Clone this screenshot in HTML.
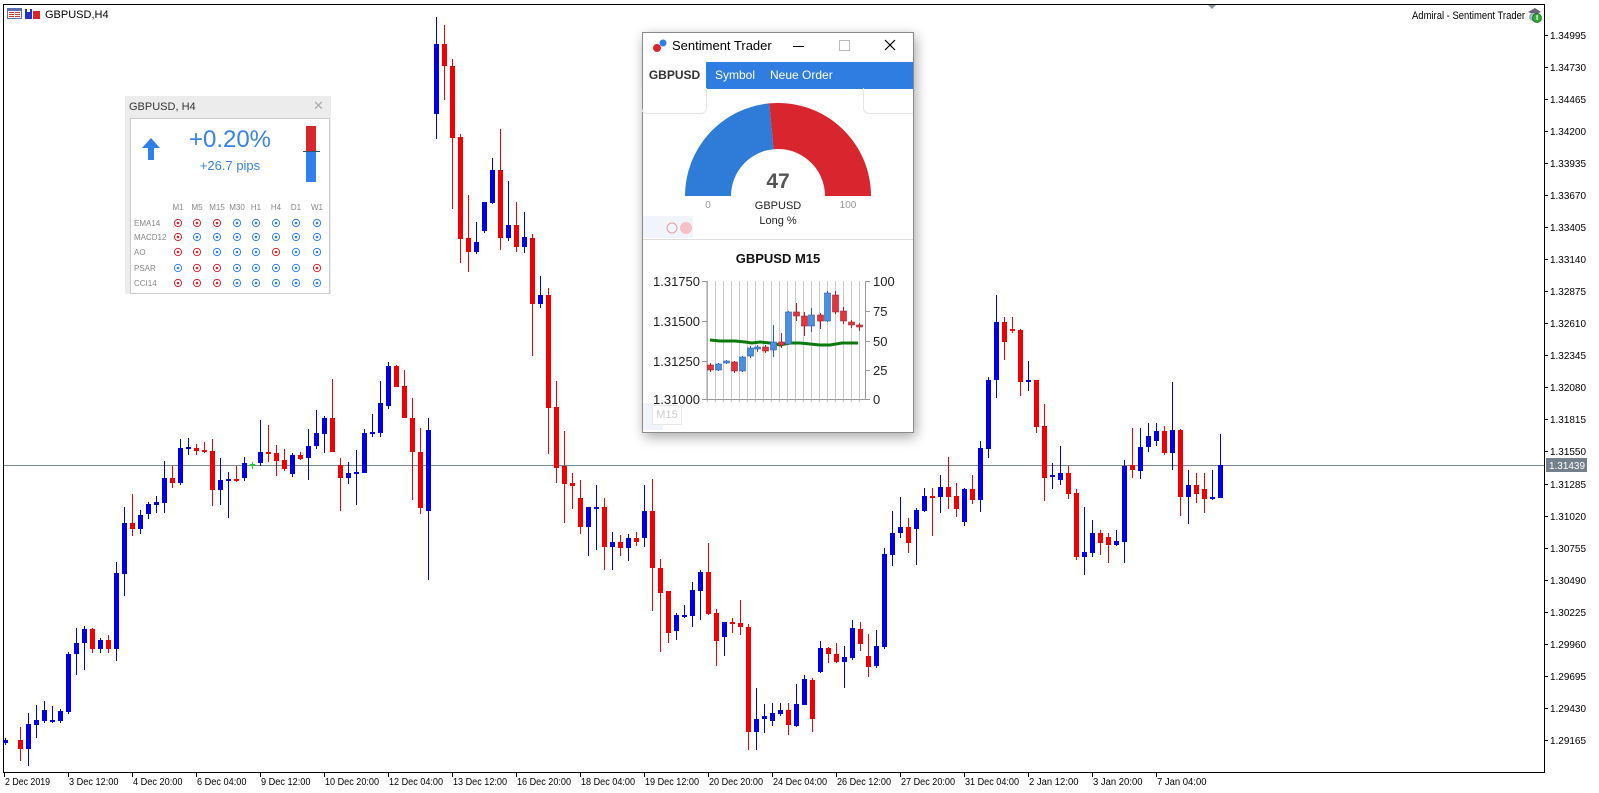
<!DOCTYPE html>
<html><head><meta charset="utf-8">
<style>
html,body{margin:0;padding:0;background:#fff;}
body{width:1599px;height:793px;position:relative;overflow:hidden;font-family:"Liberation Sans",Arial,sans-serif;}
.abs{position:absolute;}
.ax{position:absolute;font-size:11px;color:#000;white-space:nowrap;}
</style></head><body>
<svg id="main" class="abs" style="left:0;top:0" width="1599" height="793" xmlns="http://www.w3.org/2000/svg"></svg>

<!-- top-left header -->
<svg class="abs" style="left:7px;top:8px" width="34" height="11">
 <rect x="0.5" y="0.5" width="14" height="10" fill="#fff" stroke="#5a6fb0"/>
 <rect x="1" y="1" width="13" height="2" fill="#5a6fb0"/>
 <rect x="2" y="4" width="5" height="1" fill="#d33"/><rect x="8" y="4" width="5" height="1" fill="#d33"/>
 <rect x="2" y="6" width="5" height="1" fill="#d33"/><rect x="8" y="6" width="5" height="1" fill="#d33"/>
 <rect x="2" y="8" width="5" height="1" fill="#d33"/><rect x="8" y="8" width="5" height="1" fill="#d33"/>
 <rect x="18" y="1" width="7" height="10" fill="#2233cc"/><rect x="26" y="3" width="7" height="8" fill="#dd2222"/>
 <rect x="20" y="1" width="3" height="3" fill="#fff"/>
</svg>
<div class="ax" style="left:45px;top:9px;font-size:11px;">GBPUSD,H4</div>
<svg class="abs" style="left:1400px;top:6px" width="126" height="16"><text x="12" y="13" font-size="11" textLength="113" lengthAdjust="spacingAndGlyphs" font-family="Liberation Sans,Arial,sans-serif">Admiral - Sentiment Trader</text></svg>
<svg class="abs" style="left:1527px;top:7px" width="16" height="16">
 <path d="M1 5 L8 1 L14 5 L8 8 Z" fill="#667"/><circle cx="6" cy="10" r="4" fill="#9bc"/>
 <circle cx="10" cy="11" r="4.5" fill="#3a3" stroke="#262" stroke-width="0.8"/><rect x="9.5" y="8" width="1.2" height="5" fill="#fff"/>
</svg>

<!-- GBPUSD H4 widget -->
<div class="abs" style="left:125px;top:96px;width:206px;height:198px;background:#ececec;"></div>
<div class="abs" style="left:129px;top:101px;font-size:11px;color:#333;">GBPUSD, H4</div>
<div class="abs" style="left:313px;top:98px;font-size:13px;color:#aaa;">✕</div>
<div class="abs" style="left:130px;top:118px;width:198px;height:174px;background:#fff;border:1px solid #ccc;"></div>
<svg class="abs" style="left:140px;top:136px" width="22" height="26"><path d="M11 2 L20 12 L14 12 L14 24 L8 24 L8 12 L2 12 Z" fill="#2f80ed"/></svg>
<div class="abs" style="left:170px;top:126px;width:120px;text-align:center;font-size:24px;color:#3a82e8;">+0.20%</div>
<div class="abs" style="left:170px;top:158px;width:120px;text-align:center;font-size:13px;color:#3a82e8;">+26.7 pips</div>
<div class="abs" style="left:306px;top:126px;width:10px;height:26px;background:#d9262f;"></div>
<div class="abs" style="left:306px;top:152px;width:10px;height:30px;background:#2f80ed;"></div>
<div class="abs" style="left:303px;top:151px;width:17px;height:1px;background:#356;"></div>
<svg id="grid" class="abs" style="left:0;top:0" width="340" height="300"></svg>

<!-- Sentiment Trader window -->
<div class="abs" style="left:642px;top:32px;width:270px;height:399px;background:#fff;border:1px solid #8a8a8a;box-shadow:2px 4px 12px rgba(0,0,0,0.35);"></div>
<svg class="abs" style="left:652px;top:38px" width="16" height="16"><circle cx="5" cy="10" r="4" fill="#d9262f"/><circle cx="11" cy="5" r="3.5" fill="#2f80ed"/></svg>
<div class="abs" style="left:672px;top:38px;font-size:13px;color:#000;">Sentiment Trader</div>
<div class="abs" style="left:793px;top:46px;width:11px;height:1px;background:#000;"></div>
<div class="abs" style="left:839px;top:40px;width:9px;height:9px;border:1px solid #bbb;"></div>
<svg class="abs" style="left:884px;top:39px" width="12" height="12"><path d="M1 1 L11 11 M11 1 L1 11" stroke="#000" stroke-width="1.2"/></svg>
<div class="abs" style="left:643px;top:62px;width:270px;height:27px;background:#2f7de1;"></div>
<div class="abs" style="left:643px;top:62px;width:63px;height:27px;background:#fff;"></div>
<div class="abs" style="left:643px;top:68px;width:63px;text-align:center;font-size:12px;font-weight:bold;color:#333;">GBPUSD</div>
<div class="abs" style="left:715px;top:68px;font-size:12px;color:#fff;">Symbol</div>
<div class="abs" style="left:770px;top:68px;font-size:12px;color:#fff;">Neue Order</div>
<div class="abs" style="left:641px;top:88px;width:64px;height:25px;border:1px solid #e6e6e6;border-top:none;border-radius:0 0 6px 6px;"></div>
<div class="abs" style="left:863px;top:88px;width:49px;height:25px;border:1px solid #e6e6e6;border-top:none;border-right:none;border-radius:0 0 0 6px;"></div>
<div class="abs" style="left:643px;top:216px;width:50px;height:22px;background:#f1f4fa;"></div>
<div class="abs" style="left:643px;top:239px;width:270px;height:1px;background:#ddd;"></div>
<div class="abs" style="left:643px;top:403px;width:20px;height:27px;background:#f1f4fa;"></div>
<div class="abs" style="left:652px;top:405px;width:28px;height:18px;border:1px solid #e8e8e8;background:#fff;font-size:11px;color:#ccc;text-align:center;line-height:18px;">M15</div>
<svg id="win" class="abs" style="left:0;top:0" width="920" height="440"></svg>

<script>
function S(id,html){document.getElementById(id).innerHTML+=html;}
var F='font-family="Liberation Sans,Arial,sans-serif"';
var s='';
s+='<rect x="3.5" y="4.5" width="1541" height="768" fill="#fff" stroke="#000"/>';
s+='<line x1="4" y1="465.5" x2="1544" y2="465.5" stroke="#778899"/>';
s+='<path d="M1208 5 L1216 5 L1212 9 Z" fill="#8a96a3"/>';
var labs=['1.34995','1.34730','1.34465','1.34200','1.33935','1.33670','1.33405','1.33140','1.32875','1.32610','1.32345','1.32080','1.31815','1.31550','1.31285','1.31020','1.30755','1.30490','1.30225','1.29960','1.29695','1.29430','1.29165'];
for(var i=0;i<labs.length;i++){var y=35+32*i;var yy=(i>=14)?y+1:y;
 s+='<line x1="1544" y1="'+(yy+0.5)+'" x2="1548" y2="'+(yy+0.5)+'" stroke="#000"/>';
 s+='<text x="1550" y="'+(yy+4)+'" font-size="10.5" textLength="36" lengthAdjust="spacingAndGlyphs" '+F+'>'+labs[i]+'</text>';}
s+='<rect x="1546" y="458" width="41" height="14" fill="#73808c"/><text x="1549" y="469" font-size="10.5" textLength="36" lengthAdjust="spacingAndGlyphs" fill="#fff" '+F+'>1.31439</text>';
var dates=['2 Dec 2019','3 Dec 12:00','4 Dec 20:00','6 Dec 04:00','9 Dec 12:00','10 Dec 20:00','12 Dec 04:00','13 Dec 12:00','16 Dec 20:00','18 Dec 04:00','19 Dec 12:00','20 Dec 20:00','24 Dec 04:00','26 Dec 12:00','27 Dec 20:00','31 Dec 04:00','2 Jan 12:00','3 Jan 20:00','7 Jan 04:00'];
for(var i=0;i<dates.length;i++){var x=4+64*i;
 s+='<line x1="'+(x+0.5)+'" y1="772" x2="'+(x+0.5)+'" y2="777" stroke="#000"/>';
 s+='<text x="'+(x+1)+'" y="785" font-size="10.5" textLength="'+(dates[i].length*4.5)+'" lengthAdjust="spacingAndGlyphs" '+F+'>'+dates[i]+'</text>';}
var C="b 740 743 738 745|r 740 749 727 761|b 724 749 713 766|b 720 725 705 738|b 710 721 701 723|b 720 722 706 723|b 711 721 709 723|b 654 712 652 714|b 643 654 628 675|b 629 643 626 670|r 629 649 628 653|b 640 649 638 653|r 640 649 635 653|b 573 649 562 661|b 523 574 507 596|r 523 529 494 536|b 515 529 510 534|b 504 514 502 519|b 502 505 496 513|b 478 503 461 513|r 478 483 466 488|b 448 483 439 485|b 447 449 438 455|r 448 451 444 455|r 450 452 442 453|r 451 490 439 506|b 480 490 458 505|b 479 480 472 518|r 479 481 466 482|b 463 478 457 481|g 464 466 462 469|b 452 463 420 466|r 452 454 425 462|r 453 461 445 476|r 460 469 449 471|b 455 474 453 477|r 455 459 452 460|b 446 458 429 480|b 433 446 410 449|b 418 434 416 453|r 418 452 379 452|r 465 478 458 511|b 473 478 462 484|b 472 473 450 505|b 433 473 429 473|b 432 434 414 437|b 403 433 381 437|b 366 406 362 409|r 366 387 365 387|r 386 418 370 418|r 418 452 398 500|r 452 508 428 514|b 430 511 418 580|b 44 114 17 139|r 44 66 25 100|r 66 138 59 209|r 137 239 134 263|r 238 252 195 272|b 242 252 222 254|b 202 231 202 233|b 170 203 158 204|r 170 238 129 250|b 225 238 181 241|r 225 247 202 252|b 237 247 212 253|r 238 304 234 356|b 295 304 276 308|r 295 408 288 454|r 407 468 381 483|r 466 484 431 523|r 483 486 473 509|r 498 527 480 534|b 507 527 507 556|b 507 508 485 550|r 507 547 498 570|b 542 547 532 570|r 542 548 535 556|b 538 548 534 561|r 538 542 532 546|b 511 538 485 547|r 511 568 479 611|r 568 593 559 652|r 591 633 591 643|b 615 631 613 640|b 615 616 605 618|b 590 616 582 627|b 572 591 570 620|r 572 614 543 615|r 613 641 609 666|b 622 637 622 656|r 622 624 618 633|r 623 627 600 635|r 627 732 624 750|b 719 732 688 750|b 716 719 704 733|b 713 721 703 726|b 710 714 703 716|r 710 725 703 735|b 704 726 684 727|b 679 705 675 705|r 680 719 678 732|b 648 672 641 673|r 648 654 647 663|r 654 662 643 663|b 657 662 646 688|b 628 658 620 660|r 629 644 622 651|r 656 667 634 677|b 646 666 630 668|b 554 647 548 649|b 533 555 511 566|b 527 533 497 538|r 527 543 518 553|b 510 529 508 565|b 496 511 488 512|r 496 497 488 536|b 487 497 475 513|r 487 497 457 509|r 496 509 483 517|b 489 522 488 526|r 489 500 475 504|b 448 500 441 512|b 380 449 377 458|b 322 380 295 398|r 322 342 317 360|r 329 331 317 333|r 330 382 329 396|b 380 381 361 391|r 380 427 380 433|r 426 478 404 501|b 475 477 463 489|b 473 480 446 485|r 473 494 466 499|r 493 557 489 560|b 552 557 507 575|b 533 553 520 557|r 533 543 530 555|r 537 545 533 563|b 541 545 530 546|b 466 542 460 563|r 465 470 428 478|b 447 471 428 479|b 436 447 423 452|b 431 441 423 446|r 431 453 426 455|b 430 453 382 470|r 430 497 429 516|b 485 497 470 524|r 485 494 473 503|r 489 499 473 513|b 497 499 470 500|b 465 498 434 498".split('|');
var col={b:'#0000e6',r:'#f00000',g:'#22cc22'};
for(var k=0;k<C.length;k++){var p=C[k].split(' ');var t=+p[1],bt=+p[2],h=+p[3],l=+p[4];var cx=12+8*k;if(k==0)cx=5;
 var c=col[p[0]];var x0=(k==0)?4:cx-2;var w=(k==0)?4:5;
 s+='<rect x="'+cx+'" y="'+h+'" width="1" height="'+(l-h)+'" fill="'+c+'"/>';
 s+='<rect x="'+x0+'" y="'+t+'" width="'+w+'" height="'+Math.max(2,bt-t)+'" fill="'+c+'"/>';}
S('main',s);

var g='';var cols=['M1','M5','M15','M30','H1','H4','D1','W1'];var cx=[178,197,217,237,256,276,296,317];
for(var i=0;i<8;i++)g+='<text x="'+cx[i]+'" y="210" font-size="8" fill="#888" text-anchor="middle" '+F+'>'+cols[i]+'</text>';
var rows=['EMA14','MACD12','AO','PSAR','CCI14'];var ry=[223,237,252,268,283];
var pat=['RRRBBBBB','RBBBBBBB','RRBBBRBB','BRRBBBBR','RRRBBBBB'];
for(var r=0;r<5;r++){g+='<text x="134" y="'+(ry[r]+3)+'" font-size="8" fill="#888" '+F+'>'+rows[r]+'</text>';
 for(var i=0;i<8;i++){var c=pat[r][i]=='R'?'#d9262f':'#2f80ed';
  g+='<circle cx="'+cx[i]+'" cy="'+ry[r]+'" r="3.6" fill="none" stroke="'+c+'" stroke-width="1"/><circle cx="'+cx[i]+'" cy="'+ry[r]+'" r="1.3" fill="'+c+'"/>';}}
S('grid',g);

var w='';
w+='<path d="M685 196 A93 93 0 0 1 769.3 103.4 L773.6 149.2 A47 47 0 0 0 731 196 Z" fill="#2e7bd8"/>';
w+='<path d="M769.3 103.4 A93 93 0 0 1 871 196 L825 196 A47 47 0 0 0 773.6 149.2 Z" fill="#d9252d"/>';
w+='<text x="778" y="188" font-size="21" font-weight="bold" fill="#555" text-anchor="middle" '+F+'>47</text>';
w+='<text x="708" y="208" font-size="10" fill="#999" text-anchor="middle" '+F+'>0</text>';
w+='<text x="848" y="208" font-size="10" fill="#999" text-anchor="middle" '+F+'>100</text>';
w+='<text x="778" y="209" font-size="11" fill="#222" text-anchor="middle" '+F+'>GBPUSD</text>';
w+='<text x="778" y="224" font-size="11" fill="#222" text-anchor="middle" '+F+'>Long %</text>';
w+='<circle cx="672" cy="228" r="5" fill="none" stroke="#e0a0a0"/><circle cx="686" cy="228" r="6" fill="#f5c0c5"/>';
w+='<text x="778" y="263" font-size="13" font-weight="bold" fill="#111" text-anchor="middle" '+F+'>GBPUSD M15</text>';
for(var x=707;x<=865;x+=8)w+='<line x1="'+(x+0.5)+'" y1="281" x2="'+(x+0.5)+'" y2="402" stroke="#c8c8c8"/>';
w+='<line x1="707" y1="281" x2="707" y2="399.5" stroke="#999"/><line x1="865.5" y1="281" x2="865.5" y2="399.5" stroke="#999"/>';
w+='<line x1="707" y1="399.5" x2="866" y2="399.5" stroke="#999"/>';
var ly=[[281,'1.31750'],[321,'1.31500'],[361,'1.31250'],[399,'1.31000']];
for(var i=0;i<4;i++){w+='<line x1="702" y1="'+(ly[i][0]+0.5)+'" x2="707" y2="'+(ly[i][0]+0.5)+'" stroke="#999"/><text x="700" y="'+(ly[i][0]+5)+'" font-size="13" text-anchor="end" fill="#222" '+F+'>'+ly[i][1]+'</text>';}
var ry2=[[281,'100'],[311,'75'],[341,'50'],[370,'25'],[399,'0']];
for(var i=0;i<5;i++){w+='<line x1="865" y1="'+(ry2[i][0]+0.5)+'" x2="870" y2="'+(ry2[i][0]+0.5)+'" stroke="#999"/><text x="873" y="'+(ry2[i][0]+5)+'" font-size="13" fill="#222" '+F+'>'+ry2[i][1]+'</text>';}
w+='<polyline points="710,340 720,341 735,341 745,342 752,343 760,342 770,343 780,345 790,343 800,343 810,344 820,345 830,345 842,343 858,343" fill="none" stroke="#0a7a0a" stroke-width="3"/>';
var mc=[[710,'r',365,370,363,372],[718,'b',364,370,363,371],[726,'b',361,363,360,364],[734,'r',362,371,361,373],[742,'b',357,371,356,372],[750,'b',348,356,346,358],[757,'b',347,349,345,352],[765,'r',347,351,345,353],[773,'b',342,350,325,357],[781,'r',342,345,333,348],[788,'b',312,344,311,345],[796,'r',312,316,303,321],[804,'r',316,326,312,336],[811,'b',315,326,308,332],[820,'r',315,321,313,329],[827,'b',293,321,291,322],[835,'r',295,312,291,314],[843,'r',311,321,307,324],[851,'r',322,325,320,328],[859,'r',325,327,323,331]];
for(var i=0;i<mc.length;i++){var m=mc[i];var c=m[1]=='b'?'#4a90e2':'#e0373f';var st=m[1]=='b'?'#2a5faa':'#a52228';
 w+='<line x1="'+(m[0]+0.5)+'" y1="'+m[4]+'" x2="'+(m[0]+0.5)+'" y2="'+m[5]+'" stroke="'+st+'"/>';
 w+='<rect x="'+(m[0]-2.5)+'" y="'+m[2]+'" width="6" height="'+Math.max(2,m[3]-m[2])+'" fill="'+c+'" stroke="'+st+'" stroke-width="0.6"/>';}
S('win',w);
</script>
</body></html>
